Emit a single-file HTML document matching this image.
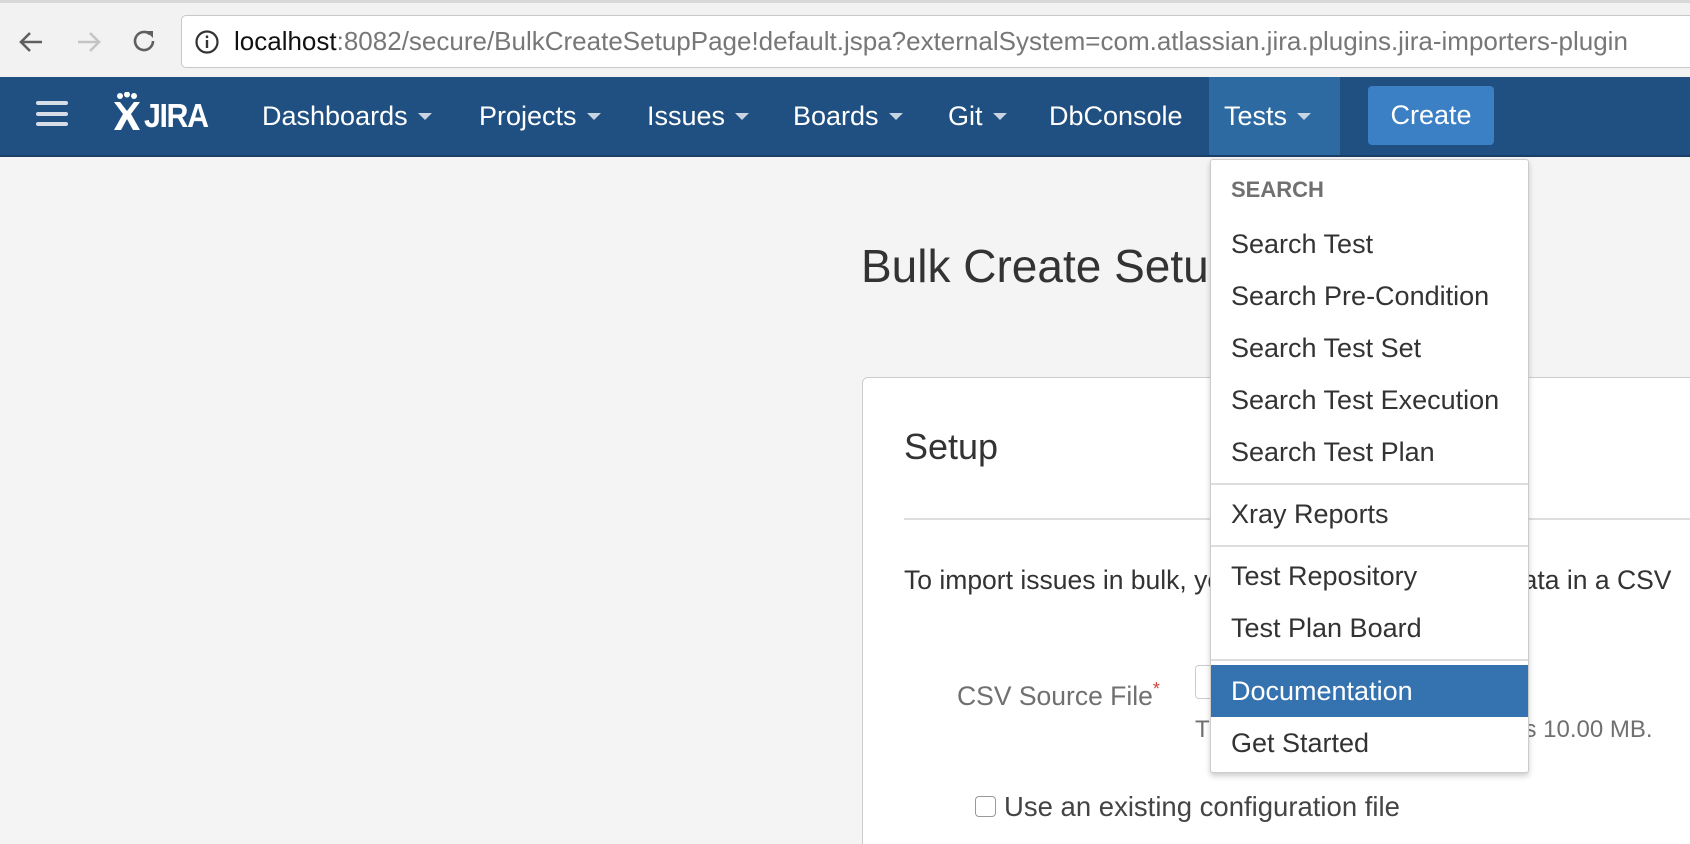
<!DOCTYPE html>
<html><head><meta charset="utf-8"><style>
*{margin:0;padding:0;box-sizing:border-box}
html{width:1690px;height:844px;overflow:hidden}
body{width:1690px;height:844px;overflow:hidden;background:#f4f4f4;font-family:"Liberation Sans",Arial,sans-serif;position:relative}
.a{position:absolute;white-space:nowrap}
#chrome{position:absolute;left:0;top:0;width:1690px;height:77px;background:#f2f2f2;border-top:3px solid #d8d8d8}
#url{position:absolute;left:181px;top:12px;width:1530px;height:53px;background:#fff;border:1px solid #c8c8c8;border-radius:5px}
#nav{position:absolute;left:0;top:77px;width:1690px;height:80px;background:#205081;border-bottom:2px solid #1a3f66}
.ni{position:absolute;top:0;height:78px;line-height:78px;color:#fff;font-size:27px}
.car{display:inline-block;width:0;height:0;border-left:7px solid transparent;border-right:7px solid transparent;border-top:7px solid #c9d4e2;vertical-align:middle;margin-left:10px;margin-top:-3px}
#dd{position:absolute;left:1210px;top:159px;width:319px;height:614px;background:#fff;border:1px solid #ccc;border-radius:3px;box-shadow:0 3px 6px rgba(0,0,0,.2)}
.it{position:absolute;left:0;width:317px;height:52px;line-height:52px;padding-left:20px;font-size:27px;color:#333}
.sep{position:absolute;left:0;width:317px;border-top:2px solid #ddd}
</style></head><body>
<div id="chrome">
<svg class="a" style="left:16px;top:24px" width="30" height="30" viewBox="0 0 30 30"><path d="M26 15H5M14 6l-9 9 9 9" stroke="#5f5f5f" stroke-width="2.6" fill="none"/></svg>
<svg class="a" style="left:74px;top:24px" width="30" height="30" viewBox="0 0 30 30"><path d="M4 15h21M16 6l9 9-9 9" stroke="#c4c4c4" stroke-width="2.6" fill="none"/></svg>
<svg class="a" style="left:129px;top:23px" width="30" height="30" viewBox="0 0 30 30"><path d="M24 15a9 9 0 1 1-3-6.7" stroke="#5f5f5f" stroke-width="2.6" fill="none"/><path d="M17 5h7v7z" fill="#5f5f5f"/></svg>
<div id="url">
<svg class="a" style="left:12px;top:13px" width="26" height="26" viewBox="0 0 26 26"><circle cx="13" cy="13" r="10.5" stroke="#333" stroke-width="2.2" fill="none"/><rect x="11.8" y="11" width="2.4" height="8" fill="#333"/><rect x="11.8" y="6.5" width="2.4" height="2.6" fill="#333"/></svg>
<div class="a" style="left:52px;top:10px;font-size:26px;line-height:30px;color:#777"><span style="color:#111">localhost</span>:8082/secure/BulkCreateSetupPage!default.jspa?externalSystem=com.atlassian.jira.plugins.jira-importers-plugin</div>
</div>
</div>
<div id="nav">
<div class="a" style="left:36px;top:24px;width:32px;height:4px;background:#d6dde6;border-radius:2px"></div>
<div class="a" style="left:36px;top:35px;width:32px;height:4px;background:#d6dde6;border-radius:2px"></div>
<div class="a" style="left:36px;top:45px;width:32px;height:4px;background:#d6dde6;border-radius:2px"></div>
<svg class="a" style="left:111px;top:15px" width="32" height="42" viewBox="0 0 32 42"><circle cx="9" cy="4" r="3" fill="#fff"/><circle cx="16" cy="2.5" r="3" fill="#fff"/><circle cx="23" cy="4" r="3" fill="#fff"/><path d="M3 10l9 12-9 16h7l6-11 6 11h7l-9-16 9-12h-6l-7 9-7-9z" fill="#fff"/></svg>
<div class="a" style="left:144px;top:16px;font-size:33px;font-weight:bold;color:#fff;line-height:46px;letter-spacing:-1.5px;transform:scaleX(0.92);transform-origin:left">JIRA</div>
<div class="ni" style="left:262px">Dashboards<span class="car"></span></div>
<div class="ni" style="left:479px">Projects<span class="car"></span></div>
<div class="ni" style="left:647px">Issues<span class="car"></span></div>
<div class="ni" style="left:793px">Boards<span class="car"></span></div>
<div class="ni" style="left:948px">Git<span class="car"></span></div>
<div class="ni" style="left:1049px">DbConsole</div>
<div class="ni" style="left:1209px;width:131px;background:#2d6aa1;padding-left:15px">Tests<span class="car"></span></div>
<div class="a" style="left:1368px;top:9px;width:126px;height:59px;background:#3b7fc4;border-radius:4px;color:#fff;font-size:27px;line-height:59px;text-align:center">Create</div>
</div>
<div class="a" style="left:861px;top:238px;font-size:46px;color:#333;line-height:56px">Bulk Create Setup</div>
<div class="a" style="left:862px;top:377px;width:900px;height:480px;background:#fff;border:1px solid #ccc;border-radius:6px"></div>
<div class="a" style="left:904px;top:424px;font-size:36px;color:#333;line-height:46px">Setup</div>
<div class="a" style="left:904px;top:518px;width:800px;border-top:2px solid #ddd"></div>
<div class="a" style="left:904px;top:565px;font-size:26.5px;color:#333;line-height:30px">To import issues in bulk, you will need to have your data in a CSV</div>
<div class="a" style="left:957px;top:674px;font-size:26.5px;color:#707070;line-height:30px">CSV Source File<sup style="color:#d04437;font-size:18px">*</sup></div>
<div class="a" style="left:1195px;top:665px;width:40px;height:34px;border:1px solid #ccc;border-radius:4px;background:#fff"></div>
<div class="a" style="left:1195px;top:716px;font-size:24px;color:#707070;line-height:28px">The maximum file upload size is 10.00 MB.</div>
<div class="a" style="left:975px;top:796px;width:21px;height:21px;border:1px solid #999;border-radius:4px;background:#fff"></div>
<div class="a" style="left:1004px;top:792px;font-size:27.5px;color:#444;line-height:30px">Use an existing configuration file</div>
<div id="dd">
<div class="it" style="top:4px;font-size:22px;font-weight:bold;color:#707070">SEARCH</div>
<div class="it" style="top:58px">Search Test</div>
<div class="it" style="top:110px">Search Pre-Condition</div>
<div class="it" style="top:162px">Search Test Set</div>
<div class="it" style="top:214px">Search Test Execution</div>
<div class="it" style="top:266px">Search Test Plan</div>
<div class="sep" style="top:323px"></div>
<div class="it" style="top:328px">Xray Reports</div>
<div class="sep" style="top:385px"></div>
<div class="it" style="top:390px">Test Repository</div>
<div class="it" style="top:442px">Test Plan Board</div>
<div class="sep" style="top:499px"></div>
<div class="it" style="top:505px;background:#3572b0;color:#fff">Documentation</div>
<div class="it" style="top:557px">Get Started</div>
</div>
</body></html>
